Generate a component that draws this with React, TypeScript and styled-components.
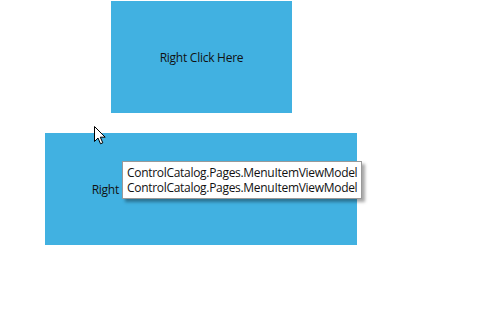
import React from "react";
import styled, { createGlobalStyle } from "styled-components";

const Global = createGlobalStyle`
  html, body { margin: 0; padding: 0; background: #fff; }
  body { font-family: "Open Sans", "Noto Sans", sans-serif; font-size: 12px; color: #000; }
`;

const Page = styled.div`
  position: relative;
  width: 503px;
  height: 323px;
  overflow: hidden;
  display: flex;
  flex-direction: column;
  padding-top: 1px;
  box-sizing: border-box;
  gap: 20px;
`;

const Target = styled.div<{ $left: number; $width: number }>`
  margin-left: ${(p) => p.$left}px;
  width: ${(p) => p.$width}px;
  height: 112px;
  background: #41b1e1;
  display: flex;
  align-items: center;
  justify-content: center;
  font-size: 12px;
  color: #111;
  white-space: nowrap;
  letter-spacing: -0.25px;
`;

const Menu = styled.div`
  position: absolute;
  left: 122px;
  top: 161px;
  width: 240px;
  height: 38px;
  box-sizing: border-box;
  background: #fff;
  border: 1px solid #999;
  box-shadow: 3px 3px 3px rgba(0, 0, 0, 0.35);
  display: flex;
  flex-direction: column;
  justify-content: center;
  padding-left: 4px;
`;

const MenuItem = styled.div`
  height: 15px;
  line-height: 15px;
  font-size: 12px;
  color: #111;
  white-space: nowrap;
  letter-spacing: -0.3px;
`;

const Cursor = styled.svg`
  position: absolute;
  left: 94px;
  top: 126px;
`;

export default function App() {
  return (
    <Page>
      <Global />
      <Target $left={111} $width={181}>Right Click Here</Target>
      <Target $left={45} $width={312}>Right Click Here for Dynamic Menu Items</Target>
      <Menu>
        <MenuItem>ControlCatalog.Pages.MenuItemViewModel</MenuItem>
        <MenuItem>ControlCatalog.Pages.MenuItemViewModel</MenuItem>
      </Menu>
      <Cursor width="14" height="20" viewBox="0 0 14 20">
        <path
          d="M0.5 0.5 L0.5 15.5 L4 12 L6.5 17.8 L8.8 16.8 L6.3 11.2 L11.2 11.2 Z"
          fill="#fff"
          stroke="#000"
          strokeWidth="1"
          strokeLinejoin="miter"
        />
      </Cursor>
    </Page>
  );
}
